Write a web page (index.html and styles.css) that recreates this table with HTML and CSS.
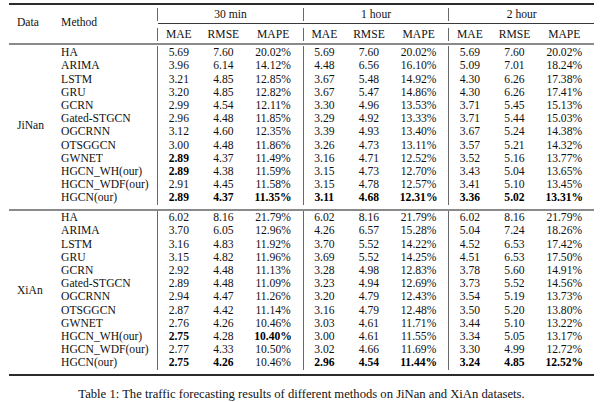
FILE: index.html
```html
<!DOCTYPE html>
<html>
<head>
<meta charset="utf-8">
<link rel="stylesheet" href="styles.css">
</head>
<body>
<div class="page">
<table class="results">
  <colgroup>
    <col class="c-data"><col class="c-method">
    <col class="c-mae"><col class="c-rmse"><col class="c-mape">
    <col class="c-mae"><col class="c-rmse"><col class="c-mape">
    <col class="c-mae"><col class="c-rmse"><col class="c-mape">
  </colgroup>
  <tbody>
    <tr class="rule toprule"><td colspan="11"><div class="line heavy"></div></td></tr>
    <tr class="hrow">
      <td class="data head-side" rowspan="3">Data</td>
      <td class="method head-side" rowspan="3">Method</td>
      <td class="num bar" colspan="3">30 min</td>
      <td class="num bar" colspan="3">1 hour</td>
      <td class="num bar" colspan="3">2 hour</td>
    </tr>
    <tr class="rule cmid"><td colspan="9"><div class="line thin"></div></td></tr>
    <tr class="hrow">
      <td class="num bar">MAE</td><td class="num">RMSE</td><td class="num mape">MAPE</td>
      <td class="num bar">MAE</td><td class="num">RMSE</td><td class="num mape">MAPE</td>
      <td class="num bar">MAE</td><td class="num">RMSE</td><td class="num mape">MAPE</td>
    </tr>
    <tr class="rule mid1"><td colspan="11"><div class="line mid"></div></td></tr>

    <tr><td class="data" rowspan="12">JiNan</td><td class="method">HA</td>
      <td class="num bar">5.69</td><td class="num">7.60</td><td class="num mape">20.02%</td>
      <td class="num bar">5.69</td><td class="num">7.60</td><td class="num mape">20.02%</td>
      <td class="num bar">5.69</td><td class="num">7.60</td><td class="num mape">20.02%</td></tr>
    <tr><td class="method">ARIMA</td>
      <td class="num bar">3.96</td><td class="num">6.14</td><td class="num mape">14.12%</td>
      <td class="num bar">4.48</td><td class="num">6.56</td><td class="num mape">16.10%</td>
      <td class="num bar">5.09</td><td class="num">7.01</td><td class="num mape">18.24%</td></tr>
    <tr><td class="method">LSTM</td>
      <td class="num bar">3.21</td><td class="num">4.85</td><td class="num mape">12.85%</td>
      <td class="num bar">3.67</td><td class="num">5.48</td><td class="num mape">14.92%</td>
      <td class="num bar">4.30</td><td class="num">6.26</td><td class="num mape">17.38%</td></tr>
    <tr><td class="method">GRU</td>
      <td class="num bar">3.20</td><td class="num">4.85</td><td class="num mape">12.82%</td>
      <td class="num bar">3.67</td><td class="num">5.47</td><td class="num mape">14.86%</td>
      <td class="num bar">4.30</td><td class="num">6.26</td><td class="num mape">17.41%</td></tr>
    <tr><td class="method">GCRN</td>
      <td class="num bar">2.99</td><td class="num">4.54</td><td class="num mape">12.11%</td>
      <td class="num bar">3.30</td><td class="num">4.96</td><td class="num mape">13.53%</td>
      <td class="num bar">3.71</td><td class="num">5.45</td><td class="num mape">15.13%</td></tr>
    <tr><td class="method">Gated-STGCN</td>
      <td class="num bar">2.96</td><td class="num">4.48</td><td class="num mape">11.85%</td>
      <td class="num bar">3.29</td><td class="num">4.92</td><td class="num mape">13.33%</td>
      <td class="num bar">3.71</td><td class="num">5.44</td><td class="num mape">15.03%</td></tr>
    <tr><td class="method">OGCRNN</td>
      <td class="num bar">3.12</td><td class="num">4.60</td><td class="num mape">12.35%</td>
      <td class="num bar">3.39</td><td class="num">4.93</td><td class="num mape">13.40%</td>
      <td class="num bar">3.67</td><td class="num">5.24</td><td class="num mape">14.38%</td></tr>
    <tr><td class="method">OTSGGCN</td>
      <td class="num bar">3.00</td><td class="num">4.48</td><td class="num mape">11.86%</td>
      <td class="num bar">3.26</td><td class="num">4.73</td><td class="num mape">13.11%</td>
      <td class="num bar">3.57</td><td class="num">5.21</td><td class="num mape">14.32%</td></tr>
    <tr><td class="method">GWNET</td>
      <td class="num bar"><b>2.89</b></td><td class="num">4.37</td><td class="num mape">11.49%</td>
      <td class="num bar">3.16</td><td class="num">4.71</td><td class="num mape">12.52%</td>
      <td class="num bar">3.52</td><td class="num">5.16</td><td class="num mape">13.77%</td></tr>
    <tr><td class="method">HGCN_WH(our)</td>
      <td class="num bar"><b>2.89</b></td><td class="num">4.38</td><td class="num mape">11.59%</td>
      <td class="num bar">3.15</td><td class="num">4.73</td><td class="num mape">12.70%</td>
      <td class="num bar">3.43</td><td class="num">5.04</td><td class="num mape">13.65%</td></tr>
    <tr><td class="method">HGCN_WDF(our)</td>
      <td class="num bar">2.91</td><td class="num">4.45</td><td class="num mape">11.58%</td>
      <td class="num bar">3.15</td><td class="num">4.78</td><td class="num mape">12.57%</td>
      <td class="num bar">3.41</td><td class="num">5.10</td><td class="num mape">13.45%</td></tr>
    <tr><td class="method">HGCN(our)</td>
      <td class="num bar"><b>2.89</b></td><td class="num"><b>4.37</b></td><td class="num mape"><b>11.35%</b></td>
      <td class="num bar"><b>3.11</b></td><td class="num"><b>4.68</b></td><td class="num mape"><b>12.31%</b></td>
      <td class="num bar"><b>3.36</b></td><td class="num"><b>5.02</b></td><td class="num mape"><b>13.31%</b></td></tr>

    <tr class="rule mid2"><td colspan="11"><div class="line mid"></div></td></tr>

    <tr><td class="data" rowspan="12">XiAn</td><td class="method">HA</td>
      <td class="num bar">6.02</td><td class="num">8.16</td><td class="num mape">21.79%</td>
      <td class="num bar">6.02</td><td class="num">8.16</td><td class="num mape">21.79%</td>
      <td class="num bar">6.02</td><td class="num">8.16</td><td class="num mape">21.79%</td></tr>
    <tr><td class="method">ARIMA</td>
      <td class="num bar">3.70</td><td class="num">6.05</td><td class="num mape">12.96%</td>
      <td class="num bar">4.26</td><td class="num">6.57</td><td class="num mape">15.28%</td>
      <td class="num bar">5.04</td><td class="num">7.24</td><td class="num mape">18.26%</td></tr>
    <tr><td class="method">LSTM</td>
      <td class="num bar">3.16</td><td class="num">4.83</td><td class="num mape">11.92%</td>
      <td class="num bar">3.70</td><td class="num">5.52</td><td class="num mape">14.22%</td>
      <td class="num bar">4.52</td><td class="num">6.53</td><td class="num mape">17.42%</td></tr>
    <tr><td class="method">GRU</td>
      <td class="num bar">3.15</td><td class="num">4.82</td><td class="num mape">11.96%</td>
      <td class="num bar">3.69</td><td class="num">5.52</td><td class="num mape">14.25%</td>
      <td class="num bar">4.51</td><td class="num">6.53</td><td class="num mape">17.50%</td></tr>
    <tr><td class="method">GCRN</td>
      <td class="num bar">2.92</td><td class="num">4.48</td><td class="num mape">11.13%</td>
      <td class="num bar">3.28</td><td class="num">4.98</td><td class="num mape">12.83%</td>
      <td class="num bar">3.78</td><td class="num">5.60</td><td class="num mape">14.91%</td></tr>
    <tr><td class="method">Gated-STGCN</td>
      <td class="num bar">2.89</td><td class="num">4.48</td><td class="num mape">11.09%</td>
      <td class="num bar">3.23</td><td class="num">4.94</td><td class="num mape">12.69%</td>
      <td class="num bar">3.73</td><td class="num">5.52</td><td class="num mape">14.56%</td></tr>
    <tr><td class="method">OGCRNN</td>
      <td class="num bar">2.94</td><td class="num">4.47</td><td class="num mape">11.26%</td>
      <td class="num bar">3.20</td><td class="num">4.79</td><td class="num mape">12.43%</td>
      <td class="num bar">3.54</td><td class="num">5.19</td><td class="num mape">13.73%</td></tr>
    <tr><td class="method">OTSGGCN</td>
      <td class="num bar">2.87</td><td class="num">4.42</td><td class="num mape">11.14%</td>
      <td class="num bar">3.16</td><td class="num">4.79</td><td class="num mape">12.48%</td>
      <td class="num bar">3.50</td><td class="num">5.20</td><td class="num mape">13.80%</td></tr>
    <tr><td class="method">GWNET</td>
      <td class="num bar">2.76</td><td class="num">4.26</td><td class="num mape">10.46%</td>
      <td class="num bar">3.03</td><td class="num">4.61</td><td class="num mape">11.71%</td>
      <td class="num bar">3.44</td><td class="num">5.10</td><td class="num mape">13.22%</td></tr>
    <tr><td class="method">HGCN_WH(our)</td>
      <td class="num bar"><b>2.75</b></td><td class="num">4.28</td><td class="num mape"><b>10.40%</b></td>
      <td class="num bar">3.00</td><td class="num">4.61</td><td class="num mape">11.55%</td>
      <td class="num bar">3.34</td><td class="num">5.05</td><td class="num mape">13.17%</td></tr>
    <tr><td class="method">HGCN_WDF(our)</td>
      <td class="num bar">2.77</td><td class="num">4.33</td><td class="num mape">10.50%</td>
      <td class="num bar">3.02</td><td class="num">4.66</td><td class="num mape">11.69%</td>
      <td class="num bar">3.30</td><td class="num">4.99</td><td class="num mape">12.72%</td></tr>
    <tr><td class="method">HGCN(our)</td>
      <td class="num bar"><b>2.75</b></td><td class="num"><b>4.26</b></td><td class="num mape">10.46%</td>
      <td class="num bar"><b>2.96</b></td><td class="num"><b>4.54</b></td><td class="num mape"><b>11.44%</b></td>
      <td class="num bar"><b>3.24</b></td><td class="num"><b>4.85</b></td><td class="num mape"><b>12.52%</b></td></tr>

    <tr class="rule bottomrule"><td colspan="11"><div class="line heavy"></div></td></tr>
  </tbody>
</table>
<p class="caption">Table 1: The traffic forecasting results of different methods on JiNan and XiAn datasets.</p>
</div>
</body>
</html>
```
FILE: styles.css
```css
html, body {
  margin: 0;
  padding: 0;
  background: #ffffff;
}

.page {
  padding: 3px 0 0 9px;
  width: 585px;
  font-family: "Liberation Serif", "Times New Roman", serif;
  font-size: 11.6px;
  color: #111;
}

.results {
  width: 585px;
  table-layout: fixed;
  border-collapse: separate;
  border-spacing: 0;
}

.c-data { width: 44px; }
.c-method { width: 104px; }
.c-mae { width: 42px; }
.c-rmse { width: 48px; }
.c-mape { width: 55.3px; }

.results td {
  padding: 0;
  height: 13.2px;
  line-height: 13.2px;
  white-space: nowrap;
  vertical-align: middle;
}

.results b {
  font-weight: bold;
  color: #000;
}

.data {
  text-align: left;
  padding-left: 8px !important;
}

.method {
  text-align: left;
  padding-left: 8px !important;
}

.head-side {
  padding-bottom: 4px !important;
}

.num {
  text-align: center;
}

.num.mape {
  padding-right: 4px !important;
}

.bar {
  border-left: 1px solid #6a6a6a;
}

.hrow td {
  height: 13px;
  line-height: 13px;
}

/* horizontal rules (booktabs style) */
.results tr.rule td {
  height: auto;
  line-height: 0;
  font-size: 0;
}

.line {
  width: 100%;
}

.line.heavy {
  height: 2px;
  background: #2b2b2b;
}

.line.thin {
  height: 1px;
  background: #3a3a3a;
}

.line.mid {
  height: 2px;
  background: #8a8a8a;
}

.toprule td { padding: 0 0 3px 0 !important; }
.cmid td { padding: 2px 0 3.5px 1px !important; }
.mid1 td { padding: 2.3px 0 1.4px 0 !important; }
.mid2 td { padding: 3.9px 0 0.7px 0 !important; }
.bottomrule td { padding: 4.4px 0 0 0 !important; }

.caption {
  margin: 11px 0 0 0;
  text-align: center;
  line-height: 14px;
  font-size: 12.65px;
  color: #111;
}
```
